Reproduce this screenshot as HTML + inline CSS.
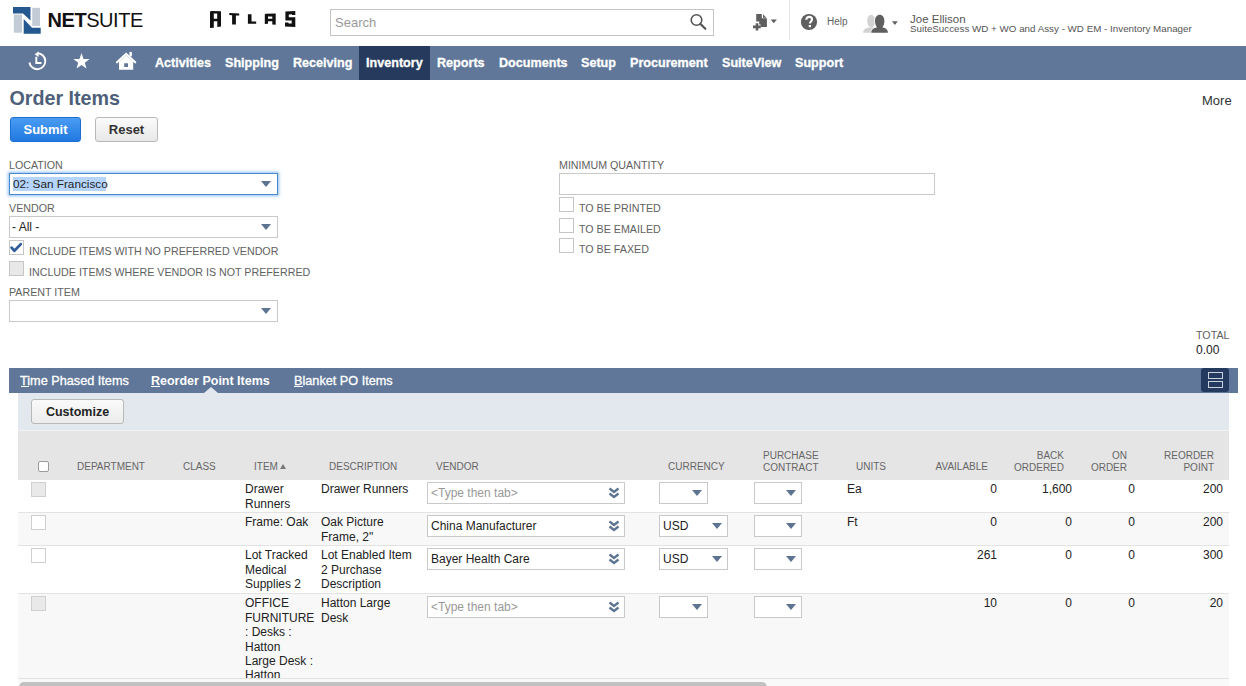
<!DOCTYPE html>
<html><head><meta charset="utf-8">
<style>
*{box-sizing:border-box;margin:0;padding:0}
html,body{width:1246px;height:686px;overflow:hidden;background:#fff;font-family:"Liberation Sans",sans-serif;position:relative}
.a{position:absolute;white-space:nowrap}
.nav{position:absolute;left:0;top:46px;width:1246px;height:34px;background:#607799}
.nt{position:absolute;top:10.2px;-webkit-text-stroke:0.3px #fff;font:bold 12.6px/15px "Liberation Sans",sans-serif;color:#fff}
.lbl{position:absolute;font:10.7px/12px "Liberation Sans",sans-serif;color:#616161;white-space:nowrap}
.sel{position:absolute;background:#fff;border:1px solid #c9c9c9}
.arr{position:absolute;width:0;height:0;border-left:5px solid transparent;border-right:5px solid transparent;border-top:6px solid #5d7392}
.cb{position:absolute;width:15px;height:15px;border:1px solid #c6c6c6;background:#fff}
</style></head><body>
<!-- header -->
<svg class="a" style="left:0;top:0" width="50" height="46" viewBox="0 0 50 46">
  <polygon fill="#24588f" points="13,7 30.5,7 30.5,20.5 23,13.5 13,13.5"/>
  <polygon fill="#24588f" points="23.7,19 32,27.7 40.7,27.7 40.7,33.8 23.7,33.8"/>
  <rect fill="#c3ccd6" x="13.8" y="14.5" width="8.2" height="18.2"/>
  <rect fill="#c3ccd6" x="32.2" y="7.8" width="7.8" height="18.1"/>
</svg>
<div class="a" style="left:47.5px;top:10px;font:bold 20px/20px 'Liberation Sans';color:#111;letter-spacing:-0.45px">NET<span style="font-weight:normal">SUITE</span></div>
<svg class="a" style="left:0;top:0" width="310" height="40" viewBox="0 0 310 40"><g fill="#111" fill-rule="evenodd">
<path d="M210,12.4 Q210,11 211.6,11 L221,11.2 V26.5 L217.3,26.9 V21.2 H213.8 V27.7 L210,27.9 Z M213.8,13.4 H217.2 V18.8 H213.8 Z"/>
<path d="M229.3,13 L239.2,13.6 V15.5 L235.9,15.4 V24.6 H232.1 V15.2 L229.3,15.1 Z"/>
<path d="M247.9,14.3 H251.5 V21.5 L256.2,21.6 V23.7 H247.9 Z"/>
<path d="M264.8,14.8 Q264.8,13.8 266,13.8 L275.7,13.4 V24.8 L272.3,24.4 V21.2 H268 V23.8 L264.8,23.9 Z M268,16.4 H272.3 V18.8 H268 Z"/>
<path d="M285.4,11.6 L295.3,11 V15 H292 V14.3 L288.8,14.4 V17.2 L295.3,17.2 V27 L285,26.6 V22.6 H288.5 V23.4 L291.7,23.5 V20.4 L285.4,20.4 Z"/>
</g></svg>
<div class="a" style="left:330px;top:9px;width:384px;height:27px;border:1px solid #c4c4c4;background:#fff"></div>
<div class="a" style="left:335px;top:16px;font:13px/13px 'Liberation Sans';color:#9a9a9a">Search</div>
<svg class="a" style="left:688px;top:11px" width="20" height="20" viewBox="0 0 20 20"><circle cx="8.5" cy="9" r="5.3" fill="none" stroke="#555" stroke-width="1.6"/><line x1="12.5" y1="13" x2="17.3" y2="17.8" stroke="#555" stroke-width="2.2" stroke-linecap="round"/></svg>
<svg class="a" style="left:740px;top:0" width="45" height="40" viewBox="740 0 45 40"><g fill="#5f5f5f">
<path d="M756.2,14 H761.8 V18.3 H766.9 V27.1 H760.6 V24.6 H759.2 V21.6 H756.2 Z"/>
<path d="M763,14.2 L766.4,17.7 H763 Z"/>
<path d="M755.7,23.3 H758.3 V25.6 H760.8 V28.2 H758.3 V30.6 H755.7 V28.2 H753 V25.6 H755.7 Z"/>
<path d="M770.7,19.4 H776.9 L773.8,23.3 Z"/>
</g></svg>
<div class="a" style="left:789px;top:0;width:1px;height:40px;background:#e6e6e6"></div>
<svg class="a" style="left:800px;top:13px" width="18" height="18" viewBox="0 0 18 18"><circle cx="9" cy="9" r="8.1" fill="#5f5f5f"/><path d="M6.3,6.8 C6.3,4.9 7.6,3.9 9.2,3.9 C11,3.9 12,5 12,6.4 C12,8.4 9.9,8.5 9.9,10.6" fill="none" stroke="#fff" stroke-width="2.1"/><rect x="8.7" y="12" width="2.3" height="2.2" fill="#fff"/></svg>
<div class="a" style="left:827px;top:16px;font:10px/11px 'Liberation Sans';color:#5f5f5f">Help</div>
<svg class="a" style="left:862px;top:13px" width="40" height="21" viewBox="0 0 40 21">
 <ellipse cx="9.2" cy="8" rx="4" ry="6.2" fill="#d2d2d2"/>
 <path d="M1.2,19.8 C1.2,16.5 3,15.5 6.5,14.5 H12 V19.8 Z" fill="#d2d2d2"/>
 <path d="M8.6,20.5 C8.6,16.3 11,15 14.5,14 C13,12.5 12.3,10.5 12.3,8 C12.3,4 14.5,1.2 17.7,1.2 C20.9,1.2 23.1,4 23.1,8 C23.1,10.5 22.4,12.5 20.9,14 C24.4,15 26.6,16.3 26.6,20.5 Z" fill="#fff"/>
 <path d="M9.3,19.8 C9.3,16.5 11.5,15.3 15,14.3 C13.7,12.8 13,10.6 13,8 C13,4.3 15,1.8 17.7,1.8 C20.4,1.8 22.4,4.3 22.4,8 C22.4,10.6 21.7,12.8 20.4,14.3 C23.9,15.3 25.9,16.5 25.9,19.8 Z" fill="#5f5f5f"/>
 <path d="M30,8.3 h5.8 l-2.9,3.8z" fill="#5f5f5f"/>
</svg>
<div class="a" style="left:910px;top:12.6px;font:11.5px/12px 'Liberation Sans';color:#555">Joe Ellison</div>
<div class="a" style="left:910px;top:24.3px;font:9.8px/10px 'Liberation Sans';color:#555">SuiteSuccess WD + WO and Assy - WD EM - Inventory Manager</div>

<!-- nav -->
<div class="nav">
 <div class="a" style="left:359px;top:0;width:71px;height:34px;background:#253a5c"></div>
 
 
 
 <div class="nt" style="left:155px">Activities</div>
 <div class="nt" style="left:225px">Shipping</div>
 <div class="nt" style="left:293px">Receiving</div>
 <div class="nt" style="left:366px">Inventory</div>
 <div class="nt" style="left:437px">Reports</div>
 <div class="nt" style="left:499px">Documents</div>
 <div class="nt" style="left:581px">Setup</div>
 <div class="nt" style="left:630px">Procurement</div>
 <div class="nt" style="left:722px">SuiteView</div>
 <div class="nt" style="left:795px">Support</div>
</div>

<svg class="a" style="left:0;top:46px" width="150" height="34" viewBox="0 46 150 34">
<path d="M37.5,53.2 A8,8 0 1 1 29.4,62.5" fill="none" stroke="#fff" stroke-width="1.9"/>
<path d="M34.6,54.3 L38.6,51.4 L38.6,57 Z" fill="#fff"/>
<path d="M36.3,56.8 V63 H41.5" fill="none" stroke="#fff" stroke-width="1.9"/>
<path d="M81.5,53 L83.5,58.9 L89.6,59 L84.8,62.7 L86.5,68.6 L81.5,65.1 L76.5,68.6 L78.2,62.7 L73.4,59 L79.5,58.9Z" fill="#fff"/>
<path d="M117,62.3 L126.1,54 L135.2,62.3" fill="none" stroke="#fff" stroke-width="2.2" stroke-linecap="round"/>
<path d="M119,61.5 L126.1,55.6 L133.2,61.5 V69.7 H119 Z M124.2,63.2 V66.9 H128 V63.2 Z" fill="#fff" fill-rule="evenodd"/>
<rect x="129.4" y="51.9" width="2.5" height="4.5" fill="#fff"/>
</svg>
<!-- title -->
<div class="a" style="left:9.5px;top:88.3px;font:bold 19.7px/20px 'Liberation Sans';color:#4d5f79">Order Items</div>
<div class="a" style="left:1202px;top:94px;font:13px/13px 'Liberation Sans';color:#333">More</div>
<div class="a" style="left:10px;top:117px;width:71px;height:25px;border:1px solid #1f6fd0;border-radius:3px;background:linear-gradient(#4a9cf3,#2179e0);font:bold 13px/23px 'Liberation Sans';color:#fff;text-align:center">Submit</div>
<div class="a" style="left:95px;top:117px;width:63px;height:25px;border:1px solid #b8b8b8;border-radius:3px;background:linear-gradient(#fafafa,#e8e8e8);font:bold 13px/23px 'Liberation Sans';color:#333;text-align:center">Reset</div>

<!-- form left -->
<div class="lbl" style="left:9px;top:159px">LOCATION</div>
<div class="sel" style="left:9px;top:173px;width:269px;height:22px;border-color:#4b88cf;box-shadow:0 0 3px 1px #8fbdf2"></div>
<div class="a" style="left:13px;top:177px;width:93px;height:14px;background:#b5d5ff"></div>
<div class="a" style="left:13px;top:177px;font:11.75px/14px 'Liberation Sans';color:#222">02: San Francisco</div>
<div class="arr" style="left:261px;top:181px"></div>
<div class="lbl" style="left:9px;top:202px">VENDOR</div>
<div class="sel" style="left:9px;top:216px;width:269px;height:22px"></div>
<div class="a" style="left:12px;top:220px;font:12px/14px 'Liberation Sans';color:#222">- All -</div>
<div class="arr" style="left:261px;top:224px"></div>
<div class="cb" style="left:9px;top:240px"></div>
<svg class="a" style="left:9px;top:240px" width="15" height="15" viewBox="0 0 15 15"><path d="M2.6,7.6 L5.4,10.8 L11.8,4.1" fill="none" stroke="#2f5a98" stroke-width="2.7" stroke-linecap="round" stroke-linejoin="round"/></svg>
<div class="lbl" style="left:29px;top:245px">INCLUDE ITEMS WITH NO PREFERRED VENDOR</div>
<div class="cb" style="left:9px;top:261px;background:#e8e8e8"></div>
<div class="lbl" style="left:29px;top:266px">INCLUDE ITEMS WHERE VENDOR IS NOT PREFERRED</div>
<div class="lbl" style="left:9px;top:286px">PARENT ITEM</div>
<div class="sel" style="left:9px;top:300px;width:269px;height:22px"></div>
<div class="arr" style="left:261px;top:308px"></div>

<!-- form right -->
<div class="lbl" style="left:559px;top:159px">MINIMUM QUANTITY</div>
<div class="sel" style="left:559px;top:173px;width:376px;height:22px"></div>
<div class="cb" style="left:559px;top:197px"></div>
<div class="lbl" style="left:579px;top:202px">TO BE PRINTED</div>
<div class="cb" style="left:559px;top:218px"></div>
<div class="lbl" style="left:579px;top:223px">TO BE EMAILED</div>
<div class="cb" style="left:559px;top:238px"></div>
<div class="lbl" style="left:579px;top:243px">TO BE FAXED</div>

<div class="lbl" style="left:1196px;top:329px">TOTAL</div>
<div class="a" style="left:1196px;top:344px;font:12px/12px 'Liberation Sans';color:#222">0.00</div>

<!-- tabs -->
<div class="a" style="left:9px;top:368px;width:1229px;height:25px;background:#607799"></div>
<div class="a" style="left:20px;top:373.5px;font:12.7px/15px 'Liberation Sans';color:#fff;-webkit-text-stroke:0.3px #fff">Time Phased Items</div>
<div class="a" style="left:21px;top:386px;width:8px;height:1px;background:#fff"></div>
<div class="a" style="left:151px;top:373.8px;font:bold 12.5px/15px 'Liberation Sans';color:#fff">Reorder Point Items</div>
<div class="a" style="left:151px;top:386px;width:9px;height:1px;background:#fff"></div>
<div class="a" style="left:294px;top:373.5px;font:12.7px/15px 'Liberation Sans';color:#fff;-webkit-text-stroke:0.3px #fff">Blanket PO Items</div>
<div class="a" style="left:294px;top:386px;width:9px;height:1px;background:#fff"></div>
<div class="a" style="left:204px;top:387px;width:0;height:0;border-left:7px solid transparent;border-right:7px solid transparent;border-bottom:6px solid #e3e8ef"></div>
<div class="a" style="left:1201px;top:368px;width:28px;height:24px;border-radius:3px;background:#243a5e"></div>
<div class="a" style="left:1208px;top:372px;width:15px;height:7px;border:1.5px solid #c9d2de"></div>
<div class="a" style="left:1208px;top:380.5px;width:15px;height:7px;border:1.5px solid #c9d2de"></div>

<!-- sublist -->
<div class="a" style="left:18px;top:393px;width:1211px;height:37px;background:#e3e8ef"></div>
<div class="a" style="left:31px;top:399px;width:93px;height:25px;border:1px solid #b8b8b8;border-radius:3px;background:linear-gradient(#fafafa,#ececec);font:bold 12.5px/24px 'Liberation Sans';color:#222;text-align:center">Customize</div>
<div class="a" style="left:18px;top:430px;width:1211px;height:50px;background:#e5e5e5;border-top:1px solid #f3f3f3"></div>
<div class="a" style="left:38px;top:461px;width:11px;height:11px;border:1px solid #9a9a9a;border-radius:2px;background:#fff"></div>
<div class="a" style="left:77px;top:461.2px;font:10px/11.5px 'Liberation Sans';color:#666">DEPARTMENT</div>
<div class="a" style="left:183px;top:461.2px;font:10px/11.5px 'Liberation Sans';color:#666">CLASS</div>
<div class="a" style="left:254px;top:461.2px;font:10px/11.5px 'Liberation Sans';color:#666">ITEM</div>
<div class="a" style="left:280px;top:464px;width:0;height:0;border-left:3px solid transparent;border-right:3px solid transparent;border-bottom:5px solid #777"></div>
<div class="a" style="left:329px;top:461.2px;font:10px/11.5px 'Liberation Sans';color:#666">DESCRIPTION</div>
<div class="a" style="left:436px;top:461.2px;font:10px/11.5px 'Liberation Sans';color:#666">VENDOR</div>
<div class="a" style="left:668px;top:461.2px;font:10px/11.5px 'Liberation Sans';color:#666">CURRENCY</div>
<div class="a" style="left:763px;top:450.0px;font:10px/11.5px 'Liberation Sans';color:#666">PURCHASE<br>CONTRACT</div>
<div class="a" style="left:856px;top:461.2px;font:10px/11.5px 'Liberation Sans';color:#666">UNITS</div>
<div class="a" style="right:258px;top:461.2px;font:10px/11.5px 'Liberation Sans';color:#666;text-align:right">AVAILABLE</div>
<div class="a" style="right:182px;top:450.0px;font:10px/11.5px 'Liberation Sans';color:#666;text-align:right">BACK<br>ORDERED</div>
<div class="a" style="right:119px;top:450.0px;font:10px/11.5px 'Liberation Sans';color:#666;text-align:right">ON<br>ORDER</div>
<div class="a" style="right:32px;top:450.0px;font:10px/11.5px 'Liberation Sans';color:#666;text-align:right">REORDER<br>POINT</div>
<div class="a" style="left:18px;top:480px;width:1211px;height:32px;background:#fff"></div>
<div class="a" style="left:18px;top:512px;width:1211px;height:1px;background:#e3e3e3"></div>
<div class="a" style="left:31px;top:482px;width:15px;height:15px;border:1px solid #cfcfcf;background:#e9e9e9"></div>
<div class="a" style="left:245px;top:482.2px;font:12px/14.45px 'Liberation Sans';color:#222">Drawer<br>Runners</div>
<div class="a" style="left:321px;top:482.2px;font:12px/14.45px 'Liberation Sans';color:#222">Drawer Runners</div>
<div class="a" style="left:427px;top:482px;width:198px;height:22px;border:1px solid #c9c9c9;background:#fff"></div>
<div class="a" style="left:431px;top:486px;font:12px/14.45px 'Liberation Sans';color:#222;color:#999">&lt;Type then tab&gt;</div>
<svg class="a" style="left:608px;top:487px" width="12" height="12" viewBox="0 0 12 12"><path d="M1.5,1.5 L6,5 L10.5,1.5 M1.5,6.5 L6,10 L10.5,6.5" fill="none" stroke="#5d7392" stroke-width="2.3"/></svg>
<div class="a" style="left:659px;top:482px;width:49px;height:22px;border:1px solid #c9c9c9;background:#fff"></div>
<div class="a" style="left:692px;top:490px;width:0;height:0;border-left:5px solid transparent;border-right:5px solid transparent;border-top:6px solid #5d7392"></div>
<div class="a" style="left:754px;top:482px;width:48px;height:22px;border:1px solid #c9c9c9;background:#fff"></div>
<div class="a" style="left:786px;top:490px;width:0;height:0;border-left:5px solid transparent;border-right:5px solid transparent;border-top:6px solid #5d7392"></div>
<div class="a" style="left:847px;top:482.2px;font:12px/14.45px 'Liberation Sans';color:#222">Ea</div>
<div class="a" style="right:249px;top:482.2px;font:12px/14.45px 'Liberation Sans';color:#222;text-align:right">0</div>
<div class="a" style="right:174px;top:482.2px;font:12px/14.45px 'Liberation Sans';color:#222;text-align:right">1,600</div>
<div class="a" style="right:111px;top:482.2px;font:12px/14.45px 'Liberation Sans';color:#222;text-align:right">0</div>
<div class="a" style="right:23px;top:482.2px;font:12px/14.45px 'Liberation Sans';color:#222;text-align:right">200</div>
<div class="a" style="left:18px;top:513px;width:1211px;height:32px;background:#f8f8f8"></div>
<div class="a" style="left:18px;top:545px;width:1211px;height:1px;background:#e3e3e3"></div>
<div class="a" style="left:31px;top:515px;width:15px;height:15px;border:1px solid #cfcfcf;background:#fff"></div>
<div class="a" style="left:245px;top:515.2px;font:12px/14.45px 'Liberation Sans';color:#222">Frame: Oak</div>
<div class="a" style="left:321px;top:515.2px;font:12px/14.45px 'Liberation Sans';color:#222">Oak Picture<br>Frame, 2"</div>
<div class="a" style="left:427px;top:515px;width:198px;height:22px;border:1px solid #c9c9c9;background:#fff"></div>
<div class="a" style="left:431px;top:519px;font:12px/14.45px 'Liberation Sans';color:#222">China Manufacturer</div>
<svg class="a" style="left:608px;top:520px" width="12" height="12" viewBox="0 0 12 12"><path d="M1.5,1.5 L6,5 L10.5,1.5 M1.5,6.5 L6,10 L10.5,6.5" fill="none" stroke="#5d7392" stroke-width="2.3"/></svg>
<div class="a" style="left:659px;top:515px;width:69px;height:22px;border:1px solid #c9c9c9;background:#fff"></div>
<div class="a" style="left:663px;top:519px;font:12px/14.45px 'Liberation Sans';color:#222">USD</div>
<div class="a" style="left:712px;top:523px;width:0;height:0;border-left:5px solid transparent;border-right:5px solid transparent;border-top:6px solid #5d7392"></div>
<div class="a" style="left:754px;top:515px;width:48px;height:22px;border:1px solid #c9c9c9;background:#fff"></div>
<div class="a" style="left:786px;top:523px;width:0;height:0;border-left:5px solid transparent;border-right:5px solid transparent;border-top:6px solid #5d7392"></div>
<div class="a" style="left:847px;top:515.2px;font:12px/14.45px 'Liberation Sans';color:#222">Ft</div>
<div class="a" style="right:249px;top:515.2px;font:12px/14.45px 'Liberation Sans';color:#222;text-align:right">0</div>
<div class="a" style="right:174px;top:515.2px;font:12px/14.45px 'Liberation Sans';color:#222;text-align:right">0</div>
<div class="a" style="right:111px;top:515.2px;font:12px/14.45px 'Liberation Sans';color:#222;text-align:right">0</div>
<div class="a" style="right:23px;top:515.2px;font:12px/14.45px 'Liberation Sans';color:#222;text-align:right">200</div>
<div class="a" style="left:18px;top:546px;width:1211px;height:47px;background:#fff"></div>
<div class="a" style="left:18px;top:593px;width:1211px;height:1px;background:#e3e3e3"></div>
<div class="a" style="left:31px;top:548px;width:15px;height:15px;border:1px solid #cfcfcf;background:#fff"></div>
<div class="a" style="left:245px;top:548.2px;font:12px/14.45px 'Liberation Sans';color:#222">Lot Tracked<br>Medical<br>Supplies 2</div>
<div class="a" style="left:321px;top:548.2px;font:12px/14.45px 'Liberation Sans';color:#222">Lot Enabled Item<br>2 Purchase<br>Description</div>
<div class="a" style="left:427px;top:548px;width:198px;height:22px;border:1px solid #c9c9c9;background:#fff"></div>
<div class="a" style="left:431px;top:552px;font:12px/14.45px 'Liberation Sans';color:#222">Bayer Health Care</div>
<svg class="a" style="left:608px;top:553px" width="12" height="12" viewBox="0 0 12 12"><path d="M1.5,1.5 L6,5 L10.5,1.5 M1.5,6.5 L6,10 L10.5,6.5" fill="none" stroke="#5d7392" stroke-width="2.3"/></svg>
<div class="a" style="left:659px;top:548px;width:69px;height:22px;border:1px solid #c9c9c9;background:#fff"></div>
<div class="a" style="left:663px;top:552px;font:12px/14.45px 'Liberation Sans';color:#222">USD</div>
<div class="a" style="left:712px;top:556px;width:0;height:0;border-left:5px solid transparent;border-right:5px solid transparent;border-top:6px solid #5d7392"></div>
<div class="a" style="left:754px;top:548px;width:48px;height:22px;border:1px solid #c9c9c9;background:#fff"></div>
<div class="a" style="left:786px;top:556px;width:0;height:0;border-left:5px solid transparent;border-right:5px solid transparent;border-top:6px solid #5d7392"></div>
<div class="a" style="right:249px;top:548.2px;font:12px/14.45px 'Liberation Sans';color:#222;text-align:right">261</div>
<div class="a" style="right:174px;top:548.2px;font:12px/14.45px 'Liberation Sans';color:#222;text-align:right">0</div>
<div class="a" style="right:111px;top:548.2px;font:12px/14.45px 'Liberation Sans';color:#222;text-align:right">0</div>
<div class="a" style="right:23px;top:548.2px;font:12px/14.45px 'Liberation Sans';color:#222;text-align:right">300</div>
<div class="a" style="left:18px;top:594px;width:1211px;height:84px;background:#f8f8f8"></div>
<div class="a" style="left:18px;top:678px;width:1211px;height:1px;background:#e3e3e3"></div>
<div class="a" style="left:31px;top:596px;width:15px;height:15px;border:1px solid #cfcfcf;background:#e9e9e9"></div>
<div class="a" style="left:245px;top:596.2px;font:12px/14.45px 'Liberation Sans';color:#222">OFFICE<br>FURNITURE<br>: Desks :<br>Hatton<br>Large Desk :<br>Hatton</div>
<div class="a" style="left:321px;top:596.2px;font:12px/14.45px 'Liberation Sans';color:#222">Hatton Large<br>Desk</div>
<div class="a" style="left:427px;top:596px;width:198px;height:22px;border:1px solid #c9c9c9;background:#fff"></div>
<div class="a" style="left:431px;top:600px;font:12px/14.45px 'Liberation Sans';color:#222;color:#999">&lt;Type then tab&gt;</div>
<svg class="a" style="left:608px;top:601px" width="12" height="12" viewBox="0 0 12 12"><path d="M1.5,1.5 L6,5 L10.5,1.5 M1.5,6.5 L6,10 L10.5,6.5" fill="none" stroke="#5d7392" stroke-width="2.3"/></svg>
<div class="a" style="left:659px;top:596px;width:49px;height:22px;border:1px solid #c9c9c9;background:#fff"></div>
<div class="a" style="left:692px;top:604px;width:0;height:0;border-left:5px solid transparent;border-right:5px solid transparent;border-top:6px solid #5d7392"></div>
<div class="a" style="left:754px;top:596px;width:48px;height:22px;border:1px solid #c9c9c9;background:#fff"></div>
<div class="a" style="left:786px;top:604px;width:0;height:0;border-left:5px solid transparent;border-right:5px solid transparent;border-top:6px solid #5d7392"></div>
<div class="a" style="right:249px;top:596.2px;font:12px/14.45px 'Liberation Sans';color:#222;text-align:right">10</div>
<div class="a" style="right:174px;top:596.2px;font:12px/14.45px 'Liberation Sans';color:#222;text-align:right">0</div>
<div class="a" style="right:111px;top:596.2px;font:12px/14.45px 'Liberation Sans';color:#222;text-align:right">0</div>
<div class="a" style="right:23px;top:596.2px;font:12px/14.45px 'Liberation Sans';color:#222;text-align:right">20</div>
<div class="a" style="left:18px;top:678px;width:1211px;height:8px;background:#f9f9f9;border-top:1px solid #e3e3e3"></div>
<div class="a" style="left:19px;top:682px;width:748px;height:10px;border-radius:5px;background:#c1c1c1"></div></body></html>
